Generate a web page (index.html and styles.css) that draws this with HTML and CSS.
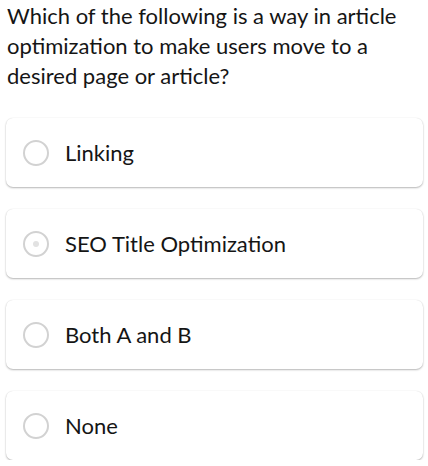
FILE: index.html
```html
<!DOCTYPE html>
<html>
<head>
<meta charset="utf-8">
<link rel="stylesheet" href="styles.css">
</head>
<body>
<div class="quiz">
  <p class="question">Which of the following is a way in article optimization to make users move to a desired page or article?</p>
  <div class="options">
    <div class="option"><span class="radio"></span><span class="label">Linking</span></div>
    <div class="option"><span class="radio dot"></span><span class="label">SEO Title Optimization</span></div>
    <div class="option"><span class="radio"></span><span class="label">Both A and B</span></div>
    <div class="option"><span class="radio"></span><span class="label">None</span></div>
  </div>
</div>
</body>
</html>
```

FILE: styles.css
```css
html, body {
  margin: 0;
  padding: 0;
  background: #fff;
}
body {
  font-family: Lato, "Open Sans", sans-serif;
  color: #151515;
}
.quiz {
  padding: 0 5px 0 6px;
}
.question {
  margin: 0;
  padding: 1px 0 0 1px;
  font-size: 22px;
  font-weight: 400;
  line-height: 30px;
  width: 410px;
}
.options {
  display: flex;
  flex-direction: column;
  gap: 22px;
  margin-top: 27px;
}
.option {
  height: 69px;
  display: flex;
  align-items: center;
  border-radius: 7px;
  background: #fff;
  box-shadow: 0 1px 2px rgba(0,0,0,0.28), 0 0 1px rgba(0,0,0,0.12);
  padding-left: 17px;
}
.radio {
  width: 26px;
  height: 26px;
  border: 2px solid #d2d2d2;
  border-radius: 50%;
  box-sizing: border-box;
  position: relative;
  flex: none;
}
.radio.dot::after {
  content: "";
  position: absolute;
  left: 50%;
  top: 50%;
  width: 6px;
  height: 6px;
  margin: -3px 0 0 -3px;
  border-radius: 50%;
  background: #e2e2e2;
}
.label {
  margin-left: 16px;
  font-size: 22px;
}
```
